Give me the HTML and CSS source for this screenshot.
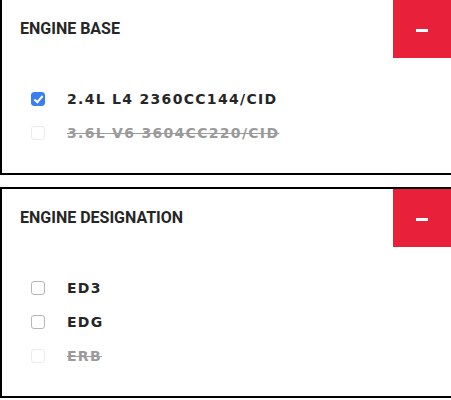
FILE: index.html
```html
<!DOCTYPE html>
<html>
<head>
<meta charset="utf-8">
<link rel="stylesheet" href="styles.css">
</head>
<body>
<div class="filters">
  <section class="panel">
    <div class="panel-head">
      <h3 class="panel-title">ENGINE BASE</h3>
      <button class="toggle" aria-label="Collapse"><span class="minus"></span></button>
    </div>
    <ul class="options">
      <li class="option"><input type="checkbox" checked><span class="label">2.4L L4 2360CC144/CID</span></li>
      <li class="option disabled"><input type="checkbox" disabled><span class="label">3.6L V6 3604CC220/CID</span></li>
    </ul>
  </section>
  <section class="panel">
    <div class="panel-head">
      <h3 class="panel-title">ENGINE DESIGNATION</h3>
      <button class="toggle" aria-label="Collapse"><span class="minus"></span></button>
    </div>
    <ul class="options">
      <li class="option"><input type="checkbox"><span class="label">ED3</span></li>
      <li class="option"><input type="checkbox"><span class="label">EDG</span></li>
      <li class="option disabled"><input type="checkbox" disabled><span class="label">ERB</span></li>
    </ul>
  </section>
</div>
</body>
</html>
```
FILE: styles.css
```css
html, body {
  margin: 0;
  padding: 0;
  background: #fff;
}
body {
  font-family: Roboto, "Liberation Sans", sans-serif;
  color: #262626;
}
.filters {
  display: flex;
  flex-direction: column;
  gap: 12px;
  margin-top: -2px;
}
.panel {
  border: 2px solid #000;
  border-right: none;
}
.panel-head {
  display: flex;
  align-items: center;
  justify-content: space-between;
  height: 58px;
}
.panel-title {
  margin: 0 0 1px 18px;
  font-size: 16px;
  font-weight: 700;
  letter-spacing: 0;
  color: #262626;
}
.toggle {
  width: 58px;
  height: 58px;
  border: none;
  padding: 0;
  margin: 0;
  background: #e9203a;
  display: flex;
  align-items: center;
  justify-content: center;
}
.minus {
  display: block;
  width: 12px;
  height: 3px;
  background: #fff;
  margin-top: 2px;
}
.options {
  list-style: none;
  margin: 0;
  padding: 24px 0 23px 29px;
}
.option {
  display: flex;
  align-items: center;
  height: 34px;
}
.option input {
  -webkit-appearance: none;
  appearance: none;
  margin: 0;
  width: 14px;
  height: 14px;
  box-sizing: border-box;
  border: 1px solid #b5b5b5;
  border-radius: 3px;
  background: #fff;
  position: relative;
}
.option input:checked {
  background: #3a7ff0;
  border-color: #3a7ff0;
}
.option input:checked::after {
  content: "";
  position: absolute;
  left: 4px;
  top: 1px;
  width: 3px;
  height: 7px;
  border: solid #fff;
  border-width: 0 2px 2px 0;
  transform: rotate(40deg);
}
.option input:disabled {
  border-color: #ececec;
}
.label {
  margin-left: 22px;
  font-family: "DejaVu Sans", sans-serif;
  font-size: 14px;
  font-weight: 700;
  letter-spacing: 1.3px;
  color: #262626;
}
.option.disabled .label {
  color: #9a9a9a;
  text-decoration: line-through;
}
```
